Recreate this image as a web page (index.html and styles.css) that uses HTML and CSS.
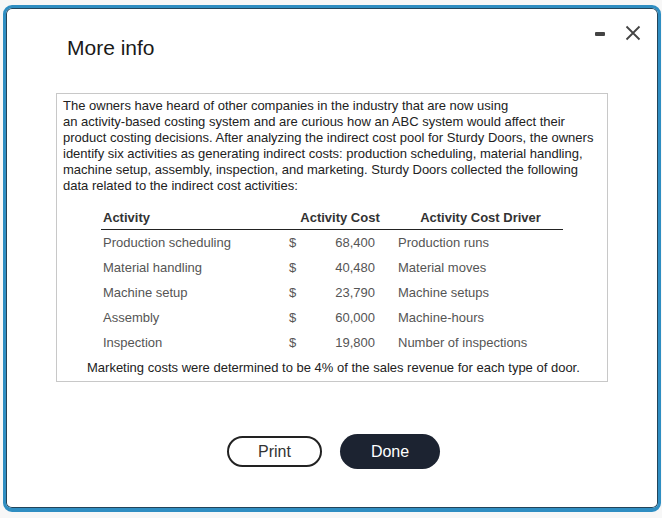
FILE: index.html
```html
<!DOCTYPE html>
<html>
<head>
<meta charset="utf-8">
<link rel="stylesheet" href="styles.css">
</head>
<body>
<div class="dialog">
  <div class="header">
    <h1 class="title">More info</h1>
    <div class="controls">
      <span class="minimize"></span>
      <svg class="close" width="16" height="16" viewBox="0 0 16 16"><path d="M1.5 1.5 L14.5 14.5 M14.5 1.5 L1.5 14.5" stroke="#444" stroke-width="1.8" fill="none"/></svg>
    </div>
  </div>
  <div class="infobox">
    <p class="intro">The owners have heard of other companies in the industry that are now using<br>an activity-based costing system and are curious how an ABC system would affect their<br>product costing decisions. After analyzing the indirect cost pool for Sturdy Doors, the owners<br>identify six activities as generating indirect costs: production scheduling, material handling,<br>machine setup, assembly, inspection, and marketing. Sturdy Doors collected the following<br>data related to the indirect cost activities:</p>
    <div class="table">
      <div class="th c1">Activity</div>
      <div class="th c2"></div>
      <div class="th c3">Activity Cost</div>
      <div class="th c4">Activity Cost Driver</div>

      <div class="td c1">Production scheduling</div>
      <div class="td c2">$</div>
      <div class="td c3">68,400</div>
      <div class="td c4">Production runs</div>

      <div class="td c1">Material handling</div>
      <div class="td c2">$</div>
      <div class="td c3">40,480</div>
      <div class="td c4">Material moves</div>

      <div class="td c1">Machine setup</div>
      <div class="td c2">$</div>
      <div class="td c3">23,790</div>
      <div class="td c4">Machine setups</div>

      <div class="td c1">Assembly</div>
      <div class="td c2">$</div>
      <div class="td c3">60,000</div>
      <div class="td c4">Machine-hours</div>

      <div class="td c1">Inspection</div>
      <div class="td c2">$</div>
      <div class="td c3">19,800</div>
      <div class="td c4">Number of inspections</div>
    </div>
    <p class="note">Marketing costs were determined to be 4% of the sales revenue for each type of door.</p>
  </div>
  <div class="buttons">
    <button class="btn print">Print</button>
    <button class="btn done">Done</button>
  </div>
</div>
</body>
</html>
```
FILE: styles.css
```css
html, body {
  margin: 0;
  padding: 0;
  background: #f7f7f7;
  font-family: "Liberation Sans", Arial, sans-serif;
}
body {
  padding: 5px 1px 0 3px;
}
.dialog {
  box-sizing: border-box;
  width: 658px;
  height: 507px;
  background: #fff;
  border: 3px solid #2f8ec2;
  border-bottom-width: 4px;
  border-radius: 9px;
  box-shadow: inset 0 0 0 1px #22445a;
  padding: 0 17px 0 0;
  display: flex;
  flex-direction: column;
}
.header {
  display: flex;
  justify-content: space-between;
  align-items: flex-start;
}
.title {
  margin: 28px 0 0 61px;
  font-size: 21px;
  line-height: 24px;
  font-weight: normal;
  color: #1a1a1a;
}
.controls {
  display: flex;
  align-items: center;
  gap: 20px;
  padding-top: 17px;
}
.minimize {
  display: block;
  width: 10px;
  height: 4px;
  border-radius: 1px;
  background: #444;
  margin-top: 1px;
}
.close {
  display: block;
}
.infobox {
  box-sizing: border-box;
  margin: 33px 0 0 50px;
  width: 552px;
  height: 289px;
  border: 1px solid #c8c8c8;
  padding: 4px 6px 0 6px;
  font-size: 13px;
  color: #222;
}
.intro {
  margin: 0;
  line-height: 16px;
  white-space: nowrap;
}
.table {
  display: grid;
  grid-template-columns: 182px 17px 80px 183px;
  margin: 13px 0 0 38px;
  width: 462px;
}
.th {
  height: 22px;
  line-height: 21px;
  font-weight: bold;
  color: #333;
  border-bottom: 1px solid #222;
  white-space: nowrap;
}
.td {
  height: 25px;
  line-height: 25px;
  color: #555;
  white-space: nowrap;
}
.c1 { padding-left: 2px; }
.th.c3 { text-align: center; }
.td.c3 { text-align: right; padding-right: 5px; }
.c2 { padding-left: 6px; }
.c4 { padding-left: 18px; }
.th.c4 { text-align: center; padding-left: 18px; }
.note {
  margin: 5px 0 0 24px;
  line-height: 16px;
  white-space: nowrap;
}
.buttons {
  display: flex;
  justify-content: center;
  align-items: center;
  gap: 18px;
  margin-top: 52px;
  padding-left: 20px;
}
.btn {
  font-family: "Liberation Sans", Arial, sans-serif;
  font-size: 16px;
  box-sizing: border-box;
  padding: 0;
  cursor: pointer;
}
.print {
  width: 95px;
  height: 31px;
  border: 2px solid #222;
  border-radius: 16px;
  background: #fff;
  color: #333;
}
.done {
  width: 100px;
  height: 35px;
  border: none;
  border-radius: 18px;
  background: #1c2331;
  color: #fff;
}
```
